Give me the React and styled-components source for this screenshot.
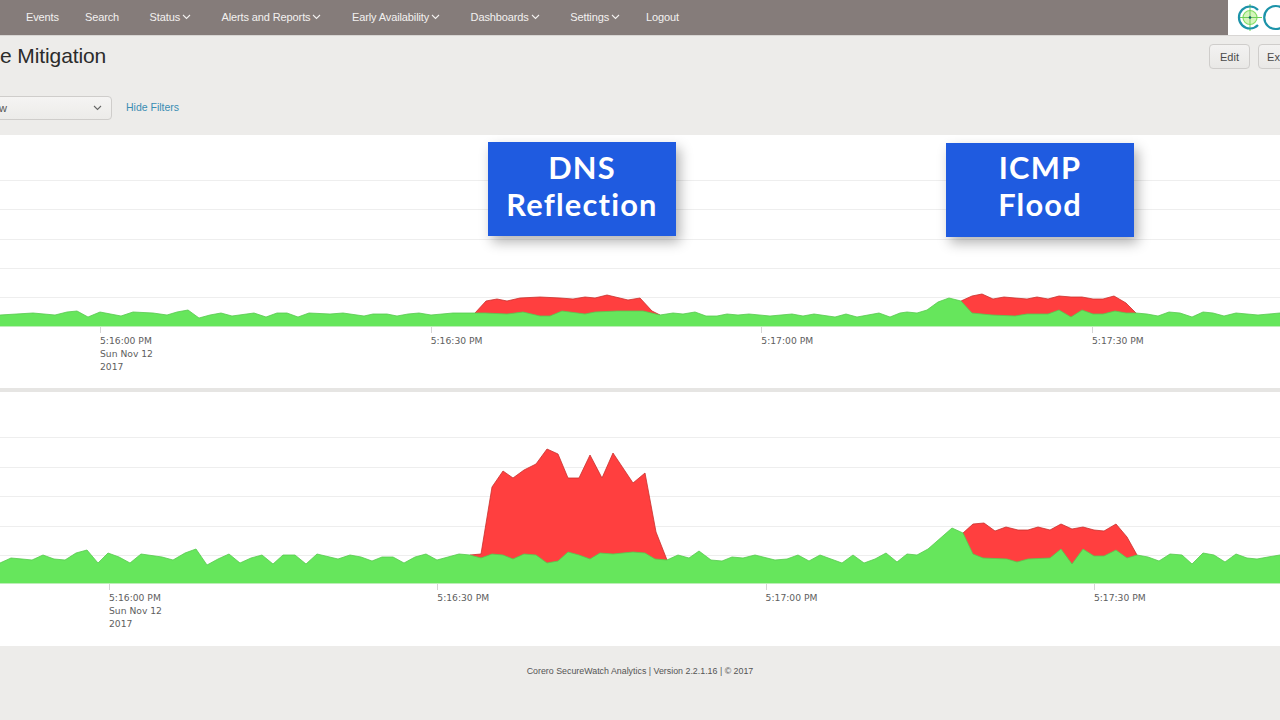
import React from 'react';
import styled, { createGlobalStyle } from 'styled-components';

const GlobalStyle = createGlobalStyle`
    html, body {
        margin: 0;
        height: 720px;
        overflow: hidden;
        background: #edecea;
        font-family: "Liberation Sans", Arial, sans-serif;
    }
`;

const Page = styled.div`
    width: 1280px;
    height: 720px;
    overflow: hidden;
    display: flex;
    flex-direction: column;
`;

const NavBar = styled.div`
    display: flex;
    align-items: stretch;
    flex: 0 0 35px;
    height: 35px;
    padding-left: 13px;
    background: #857c7a;
    border-bottom: 1px solid #d8d6d4;
`;

const NavItem = styled.a`
    display: flex;
    align-items: center;
    gap: 2px;
    padding: 0 13px 2px ${(p) => (p.$dropdown ? '17.5px' : '13px')};
    color: #f3f1f0;
    font-size: 11px;
    letter-spacing: -0.12px;
    white-space: nowrap;
`;

const LogoBox = styled.div`
    margin-left: auto;
    width: 52px;
    background: #fff;
    overflow: hidden;
`;

const TitleRow = styled.div`
    display: flex;
    align-items: flex-start;
    height: 60px;
`;

const Title = styled.h1`
    flex: 0 0 1209px;
    margin: 7px 0 0;
    color: #2b2b2b;
    font-size: 21px;
    font-weight: 400;
    line-height: 26px;
    letter-spacing: -0.1px;
`;

const Actions = styled.div`
    display: flex;
    flex: 0 0 auto;
    gap: 8px;
    margin-top: 8px;
`;

const ActionButton = styled.button`
    height: 25px;
    width: ${(p) => p.$width}px;
    padding: 0;
    border: 1px solid #cfcdcb;
    border-radius: 4px;
    background: linear-gradient(#f3f2f1, #e9e8e6);
    color: #4a4a4a;
    font: 11px "Liberation Sans", Arial, sans-serif;
`;

const FilterRow = styled.div`
    display: flex;
    align-items: center;
    gap: 14px;
    height: 24px;
    margin-left: -10px;
`;

const Select = styled.div`
    display: flex;
    align-items: center;
    justify-content: space-between;
    box-sizing: border-box;
    width: 122px;
    height: 24px;
    padding: 0 9px 0 8px;
    border: 1px solid #cfcdcb;
    border-radius: 4px;
    background: linear-gradient(#f5f4f3, #ecebe9);
    color: #555;
    font-size: 11px;
`;

const FilterLink = styled.a`
    padding-bottom: 2px;
    color: #3a8db3;
    font-size: 10.5px;
`;

const Panel = styled.section`
    background: #fff;
    height: ${(p) => p.$height}px;
    margin-top: ${(p) => p.$top}px;
    flex: 0 0 auto;
`;

const ChartArea = styled.div`
    position: relative;
    height: ${(p) => p.$height}px;
`;

const ChartSvg = styled.svg`
    display: block;
    width: 1280px;
    height: 100%;
`;

const Callout = styled.div`
    position: absolute;
    left: ${(p) => p.$left}px;
    top: ${(p) => p.$top}px;
    box-sizing: border-box;
    width: 188px;
    height: 94px;
    padding-top: ${(p) => p.$pad}px;
    background: #1f5be0;
    box-shadow: 4px 6px 12px rgba(0, 0, 0, 0.3);
    color: #fff;
    font-family: Lato, "Open Sans", sans-serif;
    font-size: 30.8px;
    font-weight: 700;
    line-height: 37px;
    letter-spacing: 1.2px;
    text-align: center;
`;

const Axis = styled.div`
    display: grid;
    grid-template-columns: repeat(4, ${(p) => p.$step}px);
    padding-left: ${(p) => p.$start}px;
`;

const Tick = styled.div`
    padding-top: ${(p) => p.$pad}px;
    color: #5e5e5e;
    font-family: "DejaVu Sans", sans-serif;
    font-size: 9.2px;
    line-height: 13px;
    background: linear-gradient(#d5d5d5, #d5d5d5) no-repeat 0 0 / 1px 6px;
`;

const Divider = styled.div`
    height: 4px;
    flex: 0 0 auto;
    background: #e6e5e3;
`;

const Footer = styled.div`
    padding-top: 20px;
    color: #555;
    font-size: 8.85px;
    line-height: 11px;
    text-align: center;
`;

const GREEN_TOP = [[0,315],[33,313],[55,315],[67,312],[77,311],[88,317],[100,312],[121,316],[133,312],[153,313],[167,315],[177,312],[188,310],[199,318],[210,315],[221,313],[232,316],[254,313],[266,317],[277,313],[287,313],[298,317],[309,313],[330,314],[343,313],[364,316],[373,314],[387,314],[397,316],[408,314],[419,313],[431,315],[453,313],[475,313],[485,313],[507,314],[523,312],[540,316],[550,316],[562,311],[585,314],[595,312],[617,311],[643,311],[660,315],[673,313],[683,314],[695,312],[706,316],[717,316],[727,314],[738,315],[749,314],[770,316],[781,315],[792,314],[803,316],[814,314],[835,317],[846,314],[857,317],[868,315],[879,313],[890,317],[900,313],[907,312],[917,313],[927,310],[938,302],[949,298],[961,301],[972,313],[992,315],[1015,316],[1027,314],[1048,314],[1059,310],[1071,317],[1082,310],[1093,314],[1103,314],[1115,311],[1126,313],[1136,313],[1147,314],[1158,316],[1169,312],[1180,313],[1192,317],[1203,312],[1213,313],[1224,316],[1236,313],[1247,314],[1258,315],[1280,313]];

const RED_TOP = [
    [[475,313],[486,301],[497,299],[507,301],[520,298],[540,297],[560,298],[573,299],[585,297],[595,298],[607,295],[628,300],[640,298],[652,311],[660,315]],
    [[961,301],[972,296],[982,294],[993,299],[1004,297],[1015,298],[1027,299],[1037,297],[1048,299],[1059,296],[1071,297],[1082,297],[1093,299],[1103,299],[1114,296],[1126,303],[1136,313]],
];

const GREEN_BOTTOM = [[0,563],[11,558],[22,559],[32,560],[43,555],[54,559],[65,560],[76,553],[87,550],[98,563],[108,553],[119,557],[130,563],[141,554],[162,557],[173,560],[185,553],[196,549],[207,565],[218,559],[229,554],[240,563],[251,558],[262,555],[273,564],[283,555],[295,555],[306,564],[317,554],[338,559],[350,555],[361,557],[372,561],[382,557],[393,557],[404,563],[415,557],[426,554],[437,560],[448,557],[459,554],[470,555],[481,558],[492,554],[503,555],[513,559],[524,554],[536,555],[547,563],[558,561],[568,552],[579,555],[590,559],[600,553],[613,554],[633,552],[645,553],[655,559],[667,560],[678,555],[689,558],[699,551],[711,560],[722,561],[732,557],[743,558],[755,555],[775,560],[787,559],[798,555],[809,561],[820,555],[842,563],[853,555],[864,563],[875,559],[886,553],[897,562],[907,554],[917,555],[928,549],[952,528],[963,533],[973,554],[983,558],[1007,559],[1017,562],[1028,559],[1050,558],[1061,549],[1072,564],[1083,549],[1094,556],[1104,556],[1116,550],[1127,558],[1137,555],[1148,557],[1159,561],[1170,554],[1182,555],[1192,564],[1203,553],[1214,555],[1225,562],[1236,554],[1247,558],[1257,559],[1268,557],[1280,555]];

const RED_BOTTOM = [
    [[470,555],[481,554],[492,487],[503,471],[513,478],[524,470],[536,464],[547,449],[558,454],[568,478],[579,478],[590,455],[602,478],[613,453],[633,483],[645,473],[656,532],[667,560]],
    [[963,533],[973,524],[984,523],[995,531],[1006,527],[1018,530],[1028,530],[1038,527],[1050,530],[1061,524],[1072,529],[1083,527],[1094,530],[1104,531],[1116,524],[1127,537],[1137,555]],
];

const toPoints = (list, top) => list.map(([x, y]) => `${x},${y - top}`).join(' ');

function AreaChart({ top, base, grid, green, red }) {
    const floor = base - top;
    return (
        <ChartSvg viewBox={`0 0 1280 ${floor + 1}`}>
            {grid.map((y) => (
                <line key={y} x1="0" x2="1280" y1={y - top + 0.5} y2={y - top + 0.5} stroke="#eeeeee" />
            ))}
            {red.map((shape, i) => (
                <polygon key={i} points={`${toPoints(shape, top)} ${shape[shape.length - 1][0]},${floor} ${shape[0][0]},${floor}`} fill="#ff3f3f" stroke="#c9302c" strokeWidth="0.8" />
            ))}
            <polygon points={`0,${floor} ${toPoints(green, top)} 1280,${floor}`} fill="#66e65c" />
            <polyline points={toPoints(green, top)} fill="none" stroke="#57c94e" strokeWidth="0.8" />
            <line x1="0" x2="1280" y1={floor + 0.5} y2={floor + 0.5} stroke="#bdeeb8" />
        </ChartSvg>
    );
}

function TimeAxis({ start, step, pad }) {
    return (
        <Axis $start={start} $step={step}>
            <Tick $pad={pad}>5:16:00 PM<br />Sun Nov 12<br />2017</Tick>
            <Tick $pad={pad}>5:16:30 PM</Tick>
            <Tick $pad={pad}>5:17:00 PM</Tick>
            <Tick $pad={pad}>5:17:30 PM</Tick>
        </Axis>
    );
}

function Chevron({ color = 'currentColor' }) {
    return (
        <svg width="9" height="6" viewBox="0 0 9 6" fill="none" stroke={color} strokeWidth="1.1">
            <path d="M1 1l3.5 3.5L8 1" />
        </svg>
    );
}

function Logo() {
    return (
        <svg width="52" height="35" viewBox="0 0 52 35" fill="none">
            <circle cx="22" cy="17.5" r="7" fill="#d6f5be" stroke="#86de66" strokeWidth="1.2" />
            <path d="M22 4v27M10 17.5h24" stroke="#6fcf5a" strokeWidth="1" />
            <circle cx="22" cy="17.5" r="1.3" fill="#17606e" />
            <path d="M30 10a11 11 0 1 0 0 15" stroke="#1c93a9" strokeWidth="2.2" />
            <path d="M56 9.5a11.5 11.5 0 1 0 0 16" stroke="#1c93a9" strokeWidth="2.2" />
        </svg>
    );
}

export default function App() {
    return (
        <Page>
            <GlobalStyle />
            <NavBar>
                <NavItem>Events</NavItem>
                <NavItem>Search</NavItem>
                <NavItem $dropdown>Status <Chevron /></NavItem>
                <NavItem $dropdown>Alerts and Reports <Chevron /></NavItem>
                <NavItem $dropdown>Early Availability <Chevron /></NavItem>
                <NavItem $dropdown>Dashboards <Chevron /></NavItem>
                <NavItem $dropdown>Settings <Chevron /></NavItem>
                <NavItem>Logout</NavItem>
                <LogoBox><Logo /></LogoBox>
            </NavBar>
            <TitleRow>
                <Title>e Mitigation</Title>
                <Actions>
                    <ActionButton $width={41}>Edit</ActionButton>
                    <ActionButton $width={50}>Export</ActionButton>
                </Actions>
            </TitleRow>
            <FilterRow>
                <Select>w<Chevron color="#666" /></Select>
                <FilterLink>Hide Filters</FilterLink>
            </FilterRow>
            <Panel $height={253} $top={15}>
                <ChartArea $height={192}>
                    <AreaChart top={135} base={326} grid={[180, 209, 239, 268, 297]} green={GREEN_TOP} red={RED_TOP} />
                    <Callout $left={488} $top={7} $pad={7}>DNS<br />Reflection</Callout>
                    <Callout $left={946} $top={8} $pad={6}>ICMP<br />Flood</Callout>
                </ChartArea>
                <TimeAxis start={100} step={330.67} pad={6.5} />
            </Panel>
            <Divider />
            <Panel $height={254} $top={0}>
                <ChartArea $height={192}>
                    <AreaChart top={392} base={583} grid={[437, 467, 496, 526, 555]} green={GREEN_BOTTOM} red={RED_BOTTOM} />
                </ChartArea>
                <TimeAxis start={109} step={328.3} pad={6.5} />
            </Panel>
            <Footer>Corero SecureWatch Analytics | Version 2.2.1.16 | © 2017</Footer>
        </Page>
    );
}
